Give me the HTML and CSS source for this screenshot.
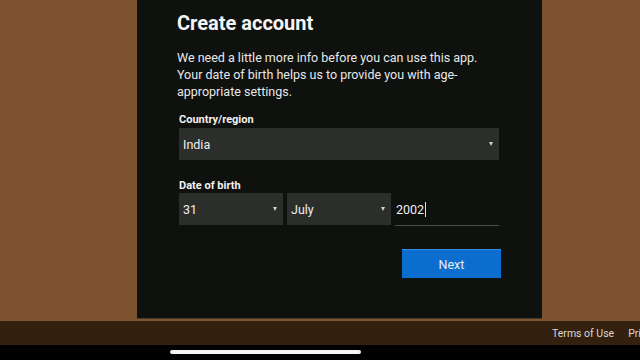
FILE: index.html
```html
<!DOCTYPE html>
<html lang="en">
<head>
  <meta charset="UTF-8" />
  <meta name="viewport" content="width=device-width, initial-scale=1" />
  <title>Create account</title>
  <link rel="stylesheet" href="styles.css">
</head>
<body>
  <div class="stage">
    <div class="panel">
      <h1>Create account</h1>
      <p class="intro">We need a little more info before you can use this app. Your date of birth helps us to provide you with age-appropriate settings.</p>

      <label class="field-label">Country/region</label>
      <div class="select wide"><span>India</span><span class="caret"></span></div>

      <label class="field-label dob">Date of birth</label>
      <div class="dob-row">
        <div class="select"><span>31</span><span class="caret"></span></div>
        <div class="select"><span>July</span><span class="caret"></span></div>
        <div class="year"><span>2002</span><span class="cursor"></span></div>
      </div>

      <div class="actions">
        <button type="button">Next</button>
      </div>
    </div>
  </div>

  <footer>
    <a href="#">Terms of Use</a>
    <a href="#">Privacy Statement</a>
  </footer>

  <div class="navbar"><div class="home"></div></div>
</body>
</html>
```

FILE: styles.css
```css
* {
  box-sizing: border-box;
}
html, body {
  margin: 0;
  height: 360px;
  overflow: hidden;
}
body {
  font-family: Roboto, 'Noto Sans', sans-serif;
  background-color: #7c5230;
  color: #f2f2f2;
}
.stage {
  height: 321px;
  padding-left: 137px;
}
.panel {
  width: 405px;
  height: 319px;
  background-color: #0e110e;
  padding: 10px 40px 0 40px;
  border-bottom: 1px solid #4a3a2a;
}
h1 {
  margin: 0;
  font-size: 20px;
  font-weight: 700;
  line-height: 26px;
  color: #f5f5f5;
}
.intro {
  margin: 13px 0 0;
  font-size: 12.5px;
  line-height: 17px;
  color: #e8e8e8;
  width: 325px;
}
.field-label {
  display: block;
  margin: 13px 0 0 2px;
  font-size: 11px;
  font-weight: 700;
  line-height: 14px;
}
.field-label.dob {
  margin-top: 19px;
}
.select {
  height: 32px;
  background-color: #2b2e2b;
  display: flex;
  align-items: center;
  justify-content: space-between;
  padding: 0 6px 0 4px;
  font-size: 12.5px;
  color: #efefef;
}
.select.wide {
  width: 320px;
  margin: 1px 0 0 2px;
}
.caret {
  width: 0;
  height: 0;
  border-left: 2.5px solid transparent;
  border-right: 2.5px solid transparent;
  border-top: 4px solid #d0d0d0;
}
.dob-row {
  display: grid;
  grid-template-columns: 104px 104px 104px;
  gap: 4px;
  margin: 0 0 0 2px;
}
.year {
  height: 33px;
  border-bottom: 1px solid #4a4d4a;
  display: flex;
  align-items: center;
  padding-left: 1px;
  font-size: 12.5px;
  color: #efefef;
}
.cursor {
  width: 1px;
  height: 15px;
  background-color: #e0e0e0;
  margin-left: 1px;
}
.actions {
  display: flex;
  justify-content: flex-end;
  margin-top: 23px;
}
button {
  width: 99px;
  height: 29px;
  border: none;
  background-color: #0b6dcd;
  color: #e8eef6;
  font-family: Roboto, sans-serif;
  font-size: 12.5px;
  margin-right: 1px;
  border-top: 1px solid #2c8ce0;
}
footer {
  height: 24px;
  background-color: #33200f;
  display: flex;
  align-items: center;
  gap: 14px;
  padding-left: 552px;
  white-space: nowrap;
  overflow: hidden;
}
footer a {
  font-size: 10.5px;
  color: #dcd6d0;
  text-decoration: none;
  flex-shrink: 0;
}
.navbar {
  height: 15px;
  background-color: #000;
  padding: 5px 0 0 170px;
}
.home {
  width: 191px;
  height: 4px;
  border-radius: 2px;
  background-color: #f4f4f4;
}
```
